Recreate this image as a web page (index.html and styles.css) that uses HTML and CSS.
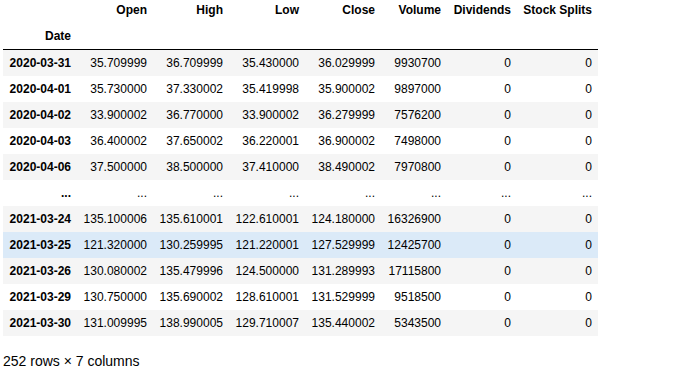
FILE: index.html
```html
<!DOCTYPE html>
<html lang="en">
  <head>
    <title>AAPL history</title>
    <meta charset="utf-8" />
    <link rel="stylesheet" href="styles.css">
  </head>
  <body>
    <div class="output">
      <table class="dataframe">
        <thead>
          <tr>
            <th class="col-index"></th>
            <th class="col-price">Open</th>
            <th class="col-price">High</th>
            <th class="col-price">Low</th>
            <th class="col-price">Close</th>
            <th class="col-volume">Volume</th>
            <th class="col-div">Dividends</th>
            <th class="col-split">Stock Splits</th>
          </tr>
          <tr>
            <th>Date</th>
            <th></th>
            <th></th>
            <th></th>
            <th></th>
            <th></th>
            <th></th>
            <th></th>
          </tr>
        </thead>
        <tbody>
          <tr>
            <th>2020-03-31</th>
            <td>35.709999</td><td>36.709999</td><td>35.430000</td><td>36.029999</td><td>9930700</td><td>0</td><td>0</td>
          </tr>
          <tr>
            <th>2020-04-01</th>
            <td>35.730000</td><td>37.330002</td><td>35.419998</td><td>35.900002</td><td>9897000</td><td>0</td><td>0</td>
          </tr>
          <tr>
            <th>2020-04-02</th>
            <td>33.900002</td><td>36.770000</td><td>33.900002</td><td>36.279999</td><td>7576200</td><td>0</td><td>0</td>
          </tr>
          <tr>
            <th>2020-04-03</th>
            <td>36.400002</td><td>37.650002</td><td>36.220001</td><td>36.900002</td><td>7498000</td><td>0</td><td>0</td>
          </tr>
          <tr>
            <th>2020-04-06</th>
            <td>37.500000</td><td>38.500000</td><td>37.410000</td><td>38.490002</td><td>7970800</td><td>0</td><td>0</td>
          </tr>
          <tr>
            <th>...</th>
            <td>...</td><td>...</td><td>...</td><td>...</td><td>...</td><td>...</td><td>...</td>
          </tr>
          <tr>
            <th>2021-03-24</th>
            <td>135.100006</td><td>135.610001</td><td>122.610001</td><td>124.180000</td><td>16326900</td><td>0</td><td>0</td>
          </tr>
          <tr class="hover">
            <th>2021-03-25</th>
            <td>121.320000</td><td>130.259995</td><td>121.220001</td><td>127.529999</td><td>12425700</td><td>0</td><td>0</td>
          </tr>
          <tr>
            <th>2021-03-26</th>
            <td>130.080002</td><td>135.479996</td><td>124.500000</td><td>131.289993</td><td>17115800</td><td>0</td><td>0</td>
          </tr>
          <tr>
            <th>2021-03-29</th>
            <td>130.750000</td><td>135.690002</td><td>128.610001</td><td>131.529999</td><td>9518500</td><td>0</td><td>0</td>
          </tr>
          <tr>
            <th>2021-03-30</th>
            <td>131.009995</td><td>138.990005</td><td>129.710007</td><td>135.440002</td><td>5343500</td><td>0</td><td>0</td>
          </tr>
        </tbody>
      </table>
      <p class="shape">252 rows × 7 columns</p>
    </div>
  </body>
</html>
```

FILE: styles.css
```css
body {
  margin: 0;
  font-family: "Liberation Sans", Arial, sans-serif;
  font-size: 14px;
  color: #000;
  background: #fff;
}

.output {
  padding-left: 3px;
  margin-top: -3px;
}

.dataframe {
  border-collapse: collapse;
  border-spacing: 0;
  border: none;
  font-size: 12px;
  table-layout: fixed;
  width: 595px;
}

.dataframe thead {
  border-bottom: 1px solid #000;
  vertical-align: bottom;
}

.dataframe th,
.dataframe td {
  box-sizing: border-box;
  text-align: right;
  vertical-align: middle;
  padding: 0.5em 0.5em;
  line-height: normal;
  white-space: nowrap;
  border: none;
}

.dataframe th {
  font-weight: bold;
}

.col-index {
  width: 74px;
}

.col-price {
  width: 76px;
}

.col-volume {
  width: 66px;
}

.col-div {
  width: 70px;
}

.col-split {
  width: 81px;
}

.dataframe tbody tr:nth-child(odd) {
  background: #f5f5f5;
}

.dataframe tbody tr.hover {
  background: #dbeaf8;
}

.shape {
  margin: 17px 0 0;
  line-height: 17px;
}
```
